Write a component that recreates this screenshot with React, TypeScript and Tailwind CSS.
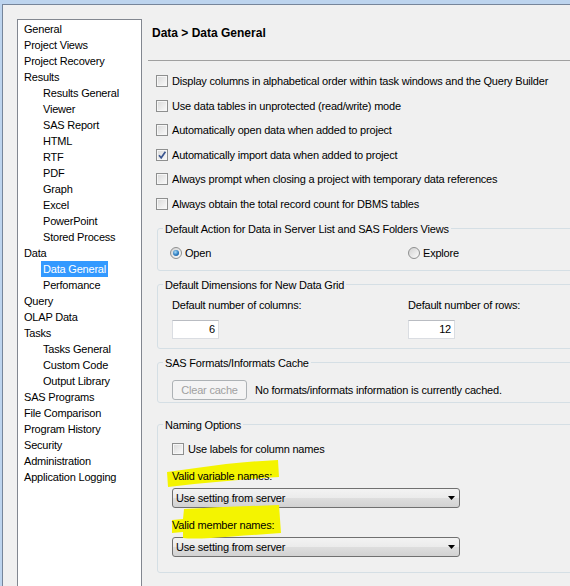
import type { ReactNode } from "react";

const tree: [string, number][] = [
  ["General", 0],
  ["Project Views", 0],
  ["Project Recovery", 0],
  ["Results", 0],
  ["Results General", 1],
  ["Viewer", 1],
  ["SAS Report", 1],
  ["HTML", 1],
  ["RTF", 1],
  ["PDF", 1],
  ["Graph", 1],
  ["Excel", 1],
  ["PowerPoint", 1],
  ["Stored Process", 1],
  ["Data", 0],
  ["Data General", 1],
  ["Perfomance", 1],
  ["Query", 0],
  ["OLAP Data", 0],
  ["Tasks", 0],
  ["Tasks General", 1],
  ["Custom Code", 1],
  ["Output Library", 1],
  ["SAS Programs", 0],
  ["File Comparison", 0],
  ["Program History", 0],
  ["Security", 0],
  ["Administration", 0],
  ["Application Logging", 0],
];

const options = [
  { label: "Display columns in alphabetical order within task windows and the Query Builder", on: false },
  { label: "Use data tables in unprotected (read/write) mode", on: false },
  { label: "Automatically open data when added to project", on: false },
  { label: "Automatically import data when added to project", on: true },
  { label: "Always prompt when closing a project with temporary data references", on: false },
  { label: "Always obtain the total record count for DBMS tables", on: false },
];

function Check({ on }: { on?: boolean }) {
  return (
    <span className="relative w-[12px] h-[12px] shrink-0 border border-[#8e8f8f] bg-linear-to-br from-[#d9d9d9] to-[#fbfbfb] shadow-[inset_0_0_0_1px_#f6f6f6]">
      {on && (
        <svg className="absolute inset-0" width="10" height="10" viewBox="0 0 10 10">
          <path d="M2 5.2 L4.2 7.8 L8.4 1.8" fill="none" stroke="#3b5690" strokeWidth="1.7" />
        </svg>
      )}
    </span>
  );
}

function Radio({ on }: { on?: boolean }) {
  return (
    <span className="w-[12px] h-[12px] shrink-0 rounded-full border border-[#8e8f8f] bg-linear-to-br from-[#d2d2d2] to-[#fcfcfc] flex items-center justify-center">
      {on && (
        <span className="w-[6px] h-[6px] rounded-full bg-[radial-gradient(circle_at_40%_35%,#a9dcf8,#2a7bc0_55%,#154a85)]" />
      )}
    </span>
  );
}

function Group({ title, className, children }: { title: string; className: string; children: ReactNode }) {
  return (
    <fieldset className={`ml-[15px] border border-[#d5dfe5] rounded-[3px] ${className}`}>
      <legend className="ml-[5px] px-[2px] h-[16px] leading-[16px]">{title}</legend>
      {children}
    </fieldset>
  );
}

function Combo({ value }: { value: string }) {
  return (
    <div className="w-[288px] h-[20px] flex items-center justify-between pl-[3px] pr-[4px] border border-[#707070] rounded-[3px] bg-[linear-gradient(#f3f3f3,#ebebeb_50%,#dedede_50%,#d2d2d2)]">
      <span>{value}</span>
      <svg width="7" height="4" viewBox="0 0 7 4">
        <path d="M0 0 H7 L3.5 4 Z" fill="#000" />
      </svg>
    </div>
  );
}

export default function App() {
  return (
    <div className="w-[570px] h-[586px] overflow-hidden bg-[#bdd4ee] pl-[2px] pt-[4px] font-['Liberation_Sans',Arial,sans-serif] text-[11px] tracking-[-0.2px] leading-[16px] text-black">
      <div className="h-full flex border-l border-t border-[#76859a] bg-[#f0f0f0]">
        {/* options tree */}
        <div className="ml-[14px] mt-[14px] w-[125px] h-[600px] shrink-0 border border-[#828790] bg-white pt-[1px]">
          {tree.map(([name, depth]) => (
            <div key={name} className={`h-[16px] whitespace-nowrap ${depth ? "pl-[25px]" : "pl-[6px]"}`}>
              {name === "Data General" ? (
                <span className="-ml-[2px] px-[2px] inline-block bg-[#3399ff] text-white">{name}</span>
              ) : (
                name
              )}
            </div>
          ))}
        </div>

        {/* settings page */}
        <div className="w-[450px] shrink-0 pt-[20px] flex flex-col">
          <div className="pl-[10px] h-[16px] text-[12px] font-bold tracking-normal">Data &gt; Data General</div>
          <div className="ml-[6px] mt-[19px] h-px bg-[#a0a0a0]" />

          <div className="mt-[12px] pl-[14px] flex flex-col gap-[8.5px]">
            {options.map((o) => (
              <label key={o.label} className="h-[16px] flex items-center gap-[4px] whitespace-nowrap">
                <Check on={o.on} />
                <span>{o.label}</span>
              </label>
            ))}
          </div>

          <Group title="Default Action for Data in Server List and SAS Folders Views" className="mt-[9px] pt-[8px] pb-[9px]">
            <div className="pl-[12px] flex">
              <div className="w-[238px] h-[16px] flex items-center gap-[3px]">
                <Radio on />
                <span>Open</span>
              </div>
              <div className="h-[16px] flex items-center gap-[3px]">
                <Radio />
                <span>Explore</span>
              </div>
            </div>
          </Group>

          <Group title="Default Dimensions for New Data Grid" className="mt-[6px] pt-[4px] pb-[9px]">
            <div className="pl-[14px] flex">
              <div className="w-[236px]">
                <div className="h-[16px]">Default number of columns:</div>
                <div className="mt-[7px] w-[47px] h-[19px] border border-[#dadde2] border-t-[#b9bcc2] bg-white text-right pr-[3px] leading-[17px]">6</div>
              </div>
              <div>
                <div className="h-[16px]">Default number of rows:</div>
                <div className="mt-[7px] w-[47px] h-[19px] border border-[#dadde2] border-t-[#b9bcc2] bg-white text-right pr-[3px] leading-[17px]">12</div>
              </div>
            </div>
          </Group>

          <Group title="SAS Formats/Informats Cache" className="mt-[6px] pt-[9px] pb-[2px]">
            <div className="pl-[14px] flex items-center gap-[8px]">
              <button disabled className="w-[75px] h-[20px] border border-[#adb2b5] rounded-[3px] bg-[#f4f4f4] text-[#a0a0a0]">
                Clear cache
              </button>
              <span>No formats/informats information is currently cached.</span>
            </div>
          </Group>

          <Group title="Naming Options" className="mt-[14px] pt-[8px] pb-[15px]">
            <div className="pl-[14px] flex flex-col">
              <label className="h-[16px] flex items-center gap-[4px]">
                <Check />
                <span>Use labels for column names</span>
              </label>

              <div className="relative mt-[11px] h-[16px]">
                {/* marker stroke */}
                <svg className="absolute left-[-6px] top-[-9px]" width="114" height="30" viewBox="0 0 114 30">
                  <path d="M1 13 Q30 9 60 5 Q90 2 112 1 L113 18 Q80 20 50 23 Q25 25 2 28 Z" fill="#f4f400" />
                </svg>
                <span className="relative">Valid variable names:</span>
              </div>
              <div className="mt-[4px]">
                <Combo value="Use setting from server" />
              </div>

              <div className="relative mt-[9px] h-[16px]">
                <svg className="absolute left-[-1px] top-[-12px]" width="112" height="35" viewBox="0 0 112 35">
                  <path d="M1 15 L12 14 L13 4 Q50 2 108 0 L110 28 Q70 31 40 33 Q20 34 12 33 L12 27 L1 28 Z" fill="#f4f400" />
                </svg>
                <span className="relative">Valid member names:</span>
              </div>
              <div className="mt-[4px]">
                <Combo value="Use setting from server" />
              </div>
            </div>
          </Group>
        </div>
      </div>
    </div>
  );
}
